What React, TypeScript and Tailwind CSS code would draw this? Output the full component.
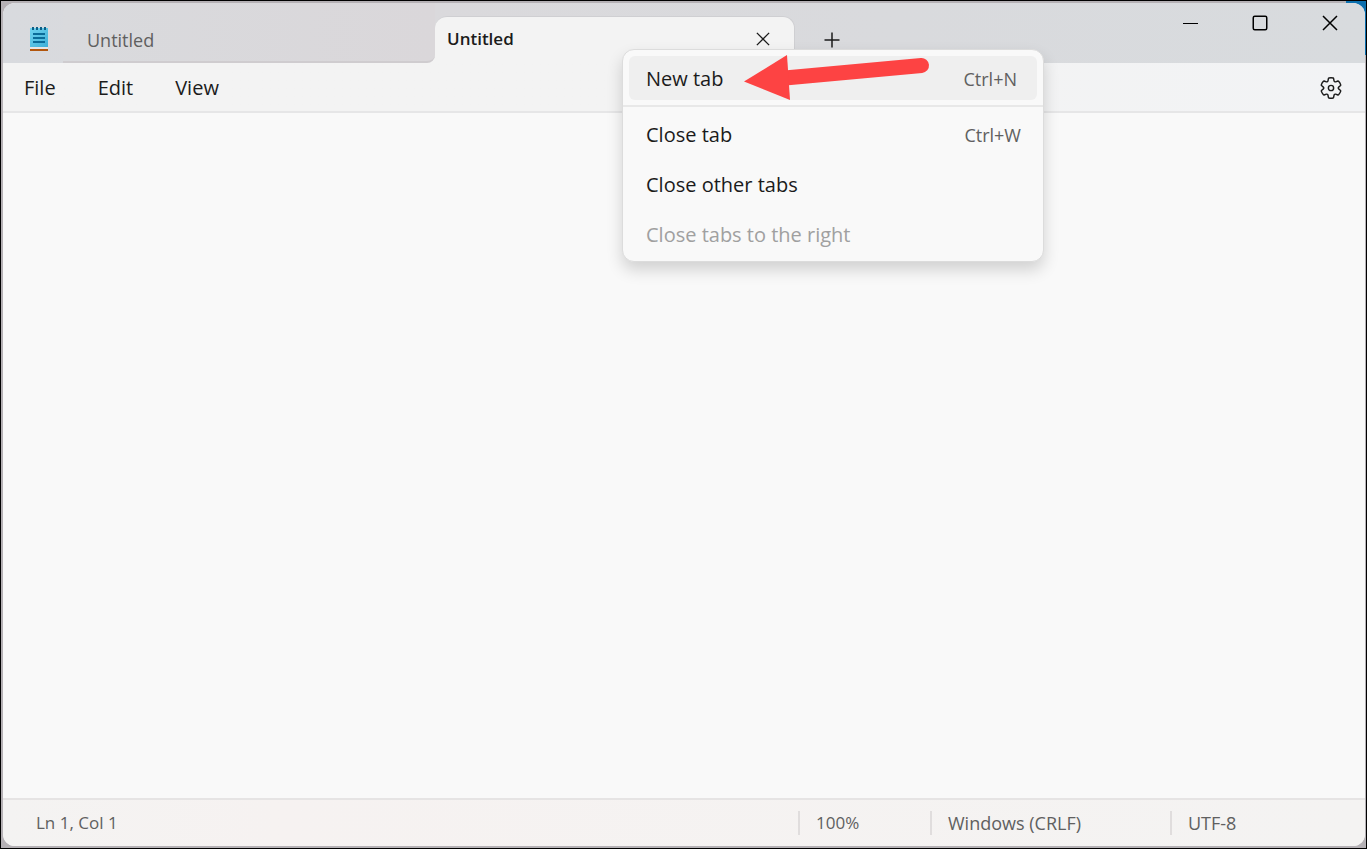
import { useState } from "react";

type MenuItem = {
  label: string;
  shortcut?: string;
  disabled?: boolean;
};

const tabActions: MenuItem[] = [
  { label: "Close tab", shortcut: "Ctrl+W" },
  { label: "Close other tabs" },
  { label: "Close tabs to the right", disabled: true },
];

function NotepadIcon() {
  return (
    <svg width="20" height="26" viewBox="0 0 20 26" aria-hidden="true">
      <defs>
        <linearGradient id="sheet" x1="0" y1="0" x2="1" y2="1">
          <stop offset="0" stopColor="#6fd3f0" />
          <stop offset="1" stopColor="#3fb0d8" />
        </linearGradient>
      </defs>
      <rect x="1" y="23" width="18" height="2" fill="#b2560d" />
      <rect x="1" y="21" width="18" height="2" fill="#e9e6e4" />
      <rect x="1" y="2" width="18" height="19" fill="url(#sheet)" />
      <path d="M4 1v3M8 1v3M12 1v3M16 1v3" stroke="#0d5f86" strokeWidth="2" />
      <path d="M4 8h12M4 12h12M4 16h12" stroke="#0b6c99" strokeWidth="2" />
    </svg>
  );
}

function CrossIcon({ size }: { size: number }) {
  return (
    <svg width={size} height={size} viewBox="0 0 16 16" fill="none" stroke="currentColor" strokeWidth="1.5">
      <path d="M1 1l14 14M15 1L1 15" />
    </svg>
  );
}

function GearIcon() {
  return (
    <svg width="24" height="24" viewBox="0 0 20 20" fill="none" stroke="currentColor" strokeWidth="1.2">
      <path d="M1.91 7.38A8.5 8.5 0 0 1 3.7 4.3a.5.5 0 0 1 .54-.13l1.92.68a1 1 0 0 0 1.32-.76l.36-2a.5.5 0 0 1 .4-.4 8.53 8.53 0 0 1 3.55 0c.2.04.35.2.38.4l.37 2a1 1 0 0 0 1.32.76l1.92-.68a.5.5 0 0 1 .54.13 8.5 8.5 0 0 1 1.78 3.08c.06.2 0 .4-.15.54l-1.56 1.32a1 1 0 0 0 0 1.52l1.56 1.32a.5.5 0 0 1 .15.54 8.5 8.5 0 0 1-1.78 3.08.5.5 0 0 1-.54.13l-1.92-.68a1 1 0 0 0-1.32.76l-.37 2a.5.5 0 0 1-.38.4 8.53 8.53 0 0 1-3.56 0 .5.5 0 0 1-.39-.4l-.36-2a1 1 0 0 0-1.32-.76l-1.92.68a.5.5 0 0 1-.54-.13 8.5 8.5 0 0 1-1.78-3.08.5.5 0 0 1 .15-.54l1.56-1.32a1 1 0 0 0 0-1.52L2.06 7.92a.5.5 0 0 1-.15-.54Z" />
      <circle cx="10" cy="10" r="2.2" />
    </svg>
  );
}

function TabMenu() {
  return (
    <div
      role="menu"
      className="absolute top-8 left-[187px] z-10 flex w-[422px] flex-col rounded-xl border border-[#dcdcdc] bg-[#f9f9f9] pb-1 text-xl shadow-[0_8px_16px_rgba(0,0,0,0.16)]"
    >
      <div className="px-1.5 pt-1.5 pb-[5px]">
        <button
          role="menuitem"
          className="flex h-11 w-full items-center justify-between rounded-md bg-[#efefef] pt-0.5 pr-5 pl-[17px]"
        >
          New tab
          <kbd className="font-[inherit] text-lg text-[#606060]">Ctrl+N</kbd>
        </button>
      </div>
      <div className="mb-1.5 h-0.5 bg-[#e8e8e8]" />
      <div className="flex flex-col gap-1.5 px-1.5">
        {tabActions.map((item) => (
          <button
            key={item.label}
            role="menuitem"
            disabled={item.disabled}
            className="flex h-11 items-center justify-between rounded-md pr-4 pl-[17px] disabled:text-[#a0a0a0]"
          >
            {item.label}
            {item.shortcut && (
              <kbd className="font-[inherit] text-lg text-[#606060]">{item.shortcut}</kbd>
            )}
          </button>
        ))}
      </div>

      {/* red pointer to "New tab" */}
      <svg
        className="pointer-events-none absolute top-1 left-[120px]"
        width="190"
        height="48"
        viewBox="743 54 190 48"
      >
        <path d="M785 78L921.5 65.5" stroke="#fd4343" strokeWidth="15" strokeLinecap="round" />
        <path d="M744 81.5L787 55L790 100Z" fill="#fd4343" />
      </svg>
    </div>
  );
}

export default function App() {
  const [text, setText] = useState("");

  return (
    <div className="relative flex h-screen border border-black bg-[#b5b1b5] font-['Open_Sans','Noto_Sans',sans-serif] text-[#1b1b1b]">
      <div className="absolute top-0 right-0 h-[54px] w-5 bg-[#0b6fae]" />
      <div className="relative mt-0.5 mr-px mb-0.5 ml-0.5 flex min-w-0 flex-1 flex-col rounded-xl bg-[#f9f9f9]">
        <header className="flex h-[60px] shrink-0 rounded-t-xl bg-linear-to-r from-[#d8dade] via-[#dad9dc] via-30% to-[#d8dbde]">
          <div className="flex w-[60px] items-center justify-center pt-3 pl-3">
            <NotepadIcon />
          </div>
          <div className="flex w-[372px] bg-linear-to-r from-transparent from-95% to-[#f3f3f3] to-95%">
            <button className="flex-1 rounded-br-lg border-b-2 border-[#cfcccf] bg-linear-to-r from-[#d9dadd] to-[#dad7da] pt-4 pl-6 text-left text-lg text-[#606060]">
              Untitled
            </button>
          </div>
          <div className="relative mt-[13px] flex w-[360px] items-center justify-between rounded-t-xl border-t border-r border-[#cfcfd2] bg-[#f3f3f3] pr-6 pb-0.5 pl-3">
            <button className="text-[17px] font-semibold">Untitled</button>
            <button aria-label="Close tab">
              <CrossIcon size={14} />
            </button>
            <TabMenu />
          </div>
          <button aria-label="New tab" className="flex w-[74px] items-center justify-center pt-[14px]">
            <svg width="16" height="16" viewBox="0 0 16 16" stroke="currentColor" strokeWidth="1.5">
              <path d="M8 .5v15M.5 8h15" />
            </svg>
          </button>
          <div className="ml-auto flex h-10 text-black">
            <button aria-label="Minimize" className="flex w-[70px] items-center justify-center">
              <svg width="16" height="16" viewBox="0 0 16 16" stroke="currentColor">
                <path d="M1 8.5h15" />
              </svg>
            </button>
            <button aria-label="Maximize" className="flex w-[70px] items-center justify-center">
              <svg width="16" height="16" viewBox="0 0 16 16" fill="none" stroke="currentColor" strokeWidth="1.5">
                <rect x="1.25" y="1.25" width="13.5" height="13.5" rx="1.5" />
              </svg>
            </button>
            <button aria-label="Close" className="flex w-[70px] items-center justify-center">
              <CrossIcon size={16} />
            </button>
          </div>
        </header>

        <nav className="flex h-[50px] shrink-0 items-center border-b-2 border-[#e6e6e7] bg-linear-to-r from-[#f3f3f3] from-60% to-[#f2f3f5] pt-0.5 pr-[22px] pl-[21px] text-xl">
          <div className="flex flex-1 gap-[42px]">
            <button>File</button>
            <button>Edit</button>
            <button>View</button>
          </div>
          <button aria-label="Settings">
            <GearIcon />
          </button>
        </nav>

        <textarea
          aria-label="Text editor"
          value={text}
          onChange={(event) => setText(event.target.value)}
          className="w-full flex-1 resize-none bg-[#f9f9f9] px-4 py-2 text-lg outline-none"
        />

        <footer className="flex h-12 shrink-0 items-center rounded-b-xl border-t-2 border-[#e6e4e4] bg-linear-to-r from-[#f4f3f2] via-[#f6f2f1] via-20% to-[#f4f3f2] text-[#606060]">
          <span className="flex-1 pl-[33px] text-[17px]">Ln 1, Col 1</span>
          <span className="flex h-6 w-[132px] items-center border-l-2 border-[#e0dddd] pl-4 text-[17px]">
            100%
          </span>
          <span className="flex h-6 w-[240px] items-center border-l-2 border-[#e0dddd] pl-4 text-lg">
            Windows (CRLF)
          </span>
          <span className="flex h-6 w-[195px] items-center border-l-2 border-[#e0dddd] pl-4 text-lg">
            UTF-8
          </span>
        </footer>
      </div>
    </div>
  );
}
